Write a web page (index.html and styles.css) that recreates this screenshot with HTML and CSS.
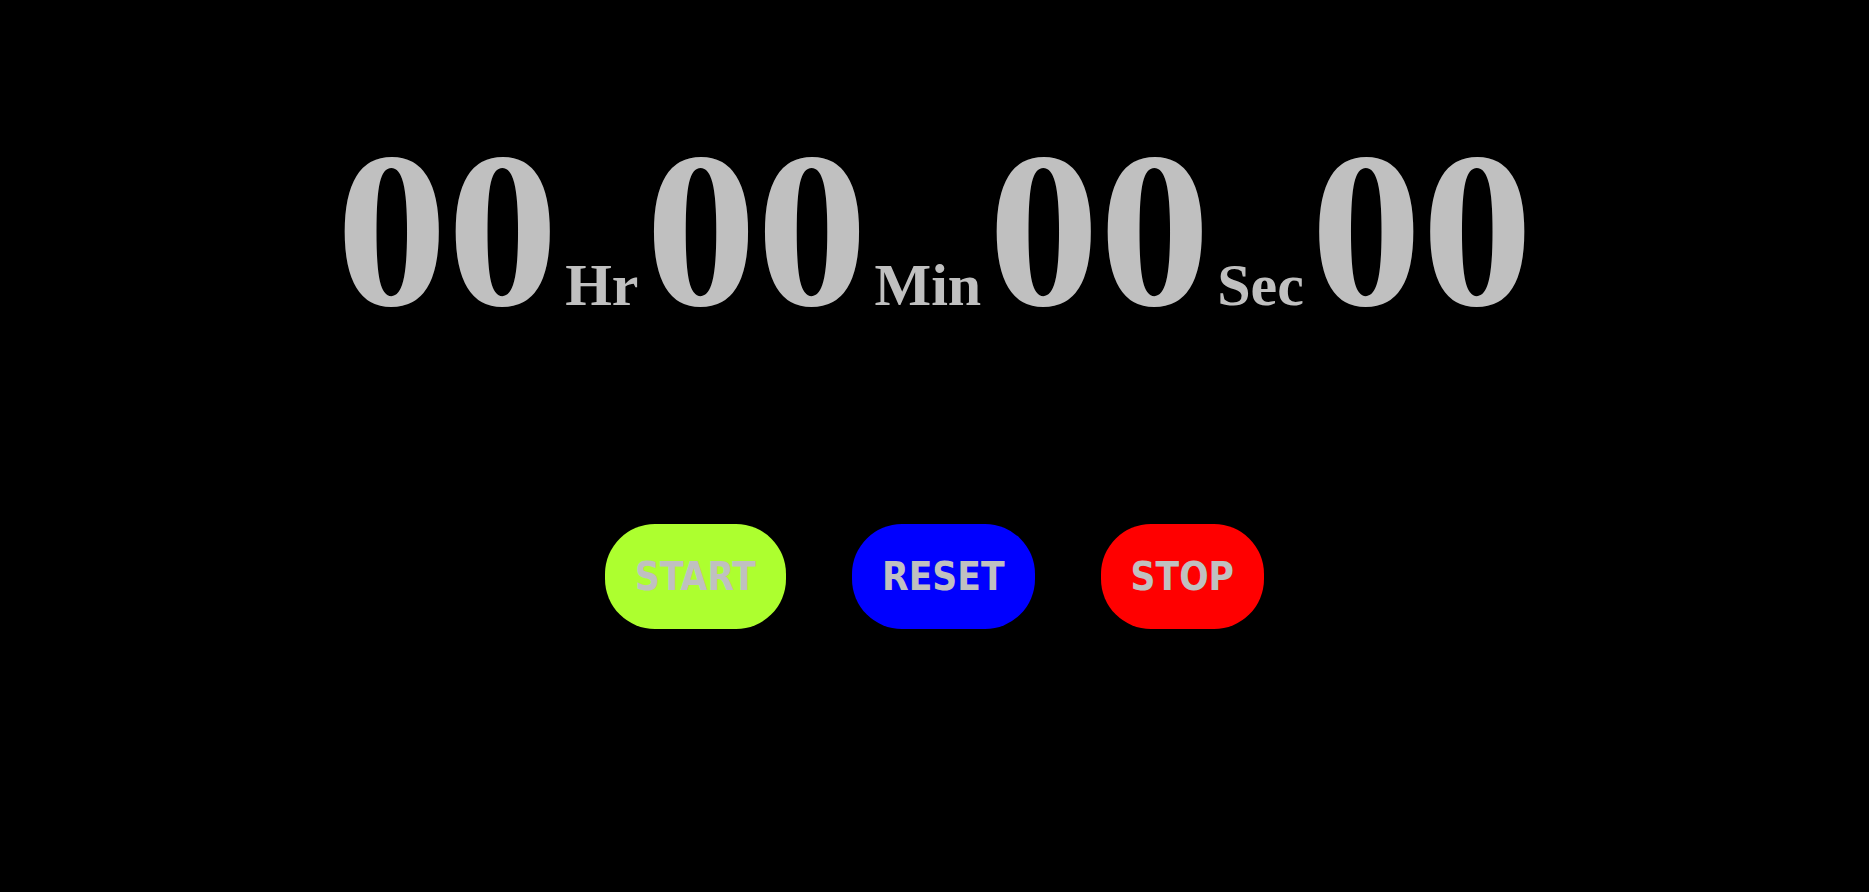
FILE: index.html
```html
<!DOCTYPE html>
<html lang="en">
<head>
<meta charset="utf-8">
<title>Stopwatch</title>
<link rel="stylesheet" href="styles.css">
</head>
<body>
<main class="watch">
  <div class="clock">
    <span class="digits">00</span><span class="unit">Hr</span><span class="digits">00</span><span class="unit">Min</span><span class="digits">00</span><span class="unit">Sec</span><span class="digits">00</span>
  </div>
  <div class="controls">
    <button class="btn btn-start">START</button>
    <button class="btn btn-reset">RESET</button>
    <button class="btn btn-stop">STOP</button>
  </div>
</main>
</body>
</html>
```
FILE: styles.css
```css
html, body {
  margin: 0;
  padding: 0;
  background: #000;
}

.watch {
  display: flex;
  flex-direction: column;
  align-items: center;
  padding-top: 107px;
}

.clock {
  display: flex;
  align-items: baseline;
  justify-content: center;
  font-family: "Liberation Serif", "Times New Roman", serif;
  font-weight: bold;
  color: #c0c0c0;
}

.digits {
  font-size: 222px;
  line-height: 246px;
}

.unit {
  font-size: 60px;
  margin: 0 7px;
}

.controls {
  display: flex;
  justify-content: center;
  gap: 66px;
  margin-top: 171px;
}

.btn {
  border: none;
  border-radius: 50px;
  padding: 30px;
  font-family: "DejaVu Sans Condensed", "DejaVu Sans", sans-serif;
  font-stretch: condensed;
  font-weight: bold;
  font-size: 38.5px;
  color: #c0c0c0;
  cursor: pointer;
}

.btn-start { background: #adff2f; }
.btn-reset { background: #0000ff; }
.btn-stop { background: #ff0000; }
```
